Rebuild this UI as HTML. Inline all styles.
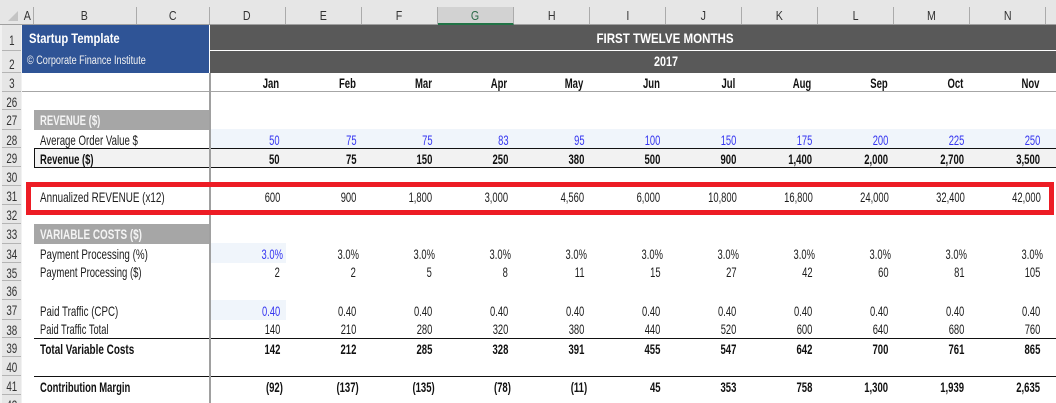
<!DOCTYPE html>
<html><head><meta charset="utf-8">
<style>
html,body{margin:0;padding:0;background:#fff}
#p{position:relative;width:1056px;height:403px;overflow:hidden;background:#fff;font-family:"Liberation Sans",sans-serif;color:#1c1c1c;font-size:14px}
.a{position:absolute}
.t{position:absolute;white-space:nowrap;transform:scaleX(.712);transform-origin:0 50%}
.t.b{transform:scaleX(.675)}
.b{font-weight:bold;color:#111}
.r{position:absolute;left:209.5px;height:19px;line-height:20px;display:flex;width:837px}
.r i{font-style:normal;flex:0 0 76.05px;width:76.05px;box-sizing:border-box;padding-right:5.5px;text-align:right;white-space:nowrap}
.r i s{text-decoration:none;display:inline-block;transform:scaleX(.67);transform-origin:100% 50%}
.r.p i{padding-right:2.8px}
.r.b s{transform:scaleX(.68)}
.r.h i{padding-right:6.2px}
.blue{color:#3535f0}
.c{position:absolute;top:7px;height:17px;line-height:18px;text-align:center;color:#333;font-size:13px;border-right:1px solid #ababab;box-sizing:border-box}
.c s{text-decoration:none;display:inline-block;transform:scaleX(.82)}
.n{position:absolute;left:2px;width:19px;background:#e6e6e6;border-bottom:1px solid #b4b4b4;box-sizing:border-box;text-align:center;color:#333}
.n s{text-decoration:none;display:inline-block;transform:scaleX(.7)}
</style></head><body><div id="p">
<div class="a" style="left:0;top:0;width:1056px;height:24px;background:#e6e6e6"></div>
<div class="a" style="left:0;top:24px;width:22px;height:379px;background:#f1f1f1"></div>
<div class="a" style="left:0;top:24px;width:1056px;height:1px;background:#9f9f9f"></div>
<svg class="a" style="left:7px;top:11px" width="12" height="11"><polygon points="11,0 11,10 1,10" fill="#c4c4c4"/></svg>
<div class="c" style="left:22px;width:12px"><s>A</s></div>
<div class="c" style="left:34px;width:102.5px"><s>B</s></div>
<div class="c" style="left:136.5px;width:73px"><s>C</s></div>
<div class="c" style="left:209.5px;width:76px"><s>D</s></div>
<div class="c" style="left:285.5px;width:76px"><s>E</s></div>
<div class="c" style="left:361.5px;width:76px"><s>F</s></div>
<div class="c" style="left:437.5px;width:76.5px;background:#d2d2d2;color:#2b6a48;border-bottom:2px solid #217346;height:18px"><s>G</s></div>
<div class="c" style="left:514px;width:76px"><s>H</s></div>
<div class="c" style="left:590px;width:76px"><s>I</s></div>
<div class="c" style="left:666px;width:76px"><s>J</s></div>
<div class="c" style="left:742px;width:76px"><s>K</s></div>
<div class="c" style="left:818px;width:76px"><s>L</s></div>
<div class="c" style="left:894px;width:76px"><s>M</s></div>
<div class="c" style="left:970px;width:76px"><s>N</s></div>

<div class="n" style="top:25px;height:26px;line-height:30px"><s>1</s></div>
<div class="n" style="top:51px;height:22px;line-height:26px"><s>2</s></div>
<div class="n" style="top:73px;height:19px;line-height:20px"><s>3</s></div>
<div class="n" style="top:92px;height:18px;line-height:20px"><s>26</s></div>
<div class="n" style="top:110px;height:20px;line-height:21px"><s>27</s></div>
<div class="n" style="top:130px;height:18px;line-height:20px"><s>28</s></div>
<div class="n" style="top:148px;height:19px;line-height:20px"><s>29</s></div>
<div class="n" style="top:167px;height:19px;line-height:20px"><s>30</s></div>
<div class="n" style="top:186px;height:19px;line-height:20px"><s>31</s></div>
<div class="n" style="top:205px;height:19px;line-height:20px"><s>32</s></div>
<div class="n" style="top:224px;height:20px;line-height:21px"><s>33</s></div>
<div class="n" style="top:244px;height:19px;line-height:20px"><s>34</s></div>
<div class="n" style="top:263px;height:18px;line-height:20px"><s>35</s></div>
<div class="n" style="top:281px;height:19px;line-height:20px"><s>36</s></div>
<div class="n" style="top:300px;height:20px;line-height:21px"><s>37</s></div>
<div class="n" style="top:320px;height:18px;line-height:20px"><s>38</s></div>
<div class="n" style="top:338px;height:19px;line-height:20px"><s>39</s></div>
<div class="n" style="top:357px;height:19px;line-height:20px"><s>40</s></div>
<div class="n" style="top:376px;height:19px;line-height:20px"><s>41</s></div>
<div class="n" style="top:395px;height:19px;line-height:20px"><s>42</s></div>

<div class="a" style="left:22px;top:25px;width:187px;height:48px;background:#2f5496"></div>
<div class="a" style="left:209.5px;top:25px;width:847px;height:25px;background:#595959"></div>
<div class="a" style="left:209.5px;top:51px;width:847px;height:22px;background:#595959"></div>
<div class="a" style="left:22px;top:91px;width:1034px;height:1px;background:#a6a6a6"></div>

<div class="t" style="left:29px;top:29px;line-height:18px;color:#fff;font-size:14px;font-weight:bold;transform:scaleX(.8)">Startup Template</div>
<div class="t" style="left:27px;top:52px;line-height:18px;color:#f2f2f2;font-size:11.5px;transform:scaleX(.79)">© Corporate Finance Institute</div>
<div class="t" style="left:565px;top:28.5px;width:200px;text-align:center;line-height:19px;color:#fff;font-size:14px;font-weight:bold;transform:scaleX(.825);transform-origin:50% 50%">FIRST TWELVE MONTHS</div>
<div class="t" style="left:566px;top:52.5px;width:200px;text-align:center;line-height:18px;color:#fff;font-size:13.5px;font-weight:bold;transform:scaleX(.8);transform-origin:50% 50%">2017</div>

<div class="r b h" style="top:73px;line-height:20px"><i><s>Jan</s></i><i><s>Feb</s></i><i><s>Mar</s></i><i><s>Apr</s></i><i><s>May</s></i><i><s>Jun</s></i><i><s>Jul</s></i><i><s>Aug</s></i><i><s>Sep</s></i><i><s>Oct</s></i><i><s>Nov</s></i></div>

<!-- section fills -->
<div class="a" style="left:34px;top:110px;width:175.5px;height:20px;background:#a6a6a6"></div>
<div class="t" style="left:40px;top:110px;line-height:21px;color:#f4f4f4;font-weight:bold;transform:scaleX(.68)">REVENUE ($)</div>
<div class="a" style="left:209.5px;top:129px;width:847px;height:19px;background:#f0f5fb"></div>
<div class="a" style="left:34px;top:148px;width:1030px;height:19.5px;box-sizing:border-box;background:#f2f2f2;border:1px solid #111;border-width:1.5px 0 1px 1.5px"></div>
<div class="a" style="left:34px;top:224px;width:175.5px;height:20px;background:#a6a6a6"></div>
<div class="t" style="left:40px;top:224px;line-height:21px;color:#f4f4f4;font-weight:bold;transform:scaleX(.71)">VARIABLE COSTS ($)</div>
<div class="a" style="left:209.5px;top:243px;width:76.5px;height:20px;background:#f0f5fb"></div>
<div class="a" style="left:209.5px;top:300px;width:76.5px;height:20px;background:#f0f5fb"></div>
<div class="a" style="left:34px;top:338px;width:1022px;height:1px;background:#111"></div>
<div class="a" style="left:34px;top:376px;width:1022px;height:1px;background:#111"></div>

<div class="t" style="left:40px;top:130px;line-height:20px;transform:scaleX(.69)">Average Order Value $</div>
<div class="r blue" style="top:130px"><i><s>50</s></i><i><s>75</s></i><i><s>75</s></i><i><s>83</s></i><i><s>95</s></i><i><s>100</s></i><i><s>150</s></i><i><s>175</s></i><i><s>200</s></i><i><s>225</s></i><i><s>250</s></i></div>

<div class="t b" style="left:40px;top:149px;line-height:20px">Revenue ($)</div>
<div class="r b" style="top:149px"><i><s>50</s></i><i><s>75</s></i><i><s>150</s></i><i><s>250</s></i><i><s>380</s></i><i><s>500</s></i><i><s>900</s></i><i><s>1,400</s></i><i><s>2,000</s></i><i><s>2,700</s></i><i><s>3,500</s></i></div>

<div class="t" style="left:40px;top:187px;line-height:20px;transform:scaleX(.706)">Annualized REVENUE (x12)</div>
<div class="r" style="top:187px"><i><s>600</s></i><i><s>900</s></i><i><s>1,800</s></i><i><s>3,000</s></i><i><s>4,560</s></i><i><s>6,000</s></i><i><s>10,800</s></i><i><s>16,800</s></i><i><s>24,000</s></i><i><s>32,400</s></i><i><s>42,000</s></i></div>

<div class="t" style="left:40px;top:244px;line-height:20px;transform:scaleX(.70)">Payment Processing (%)</div>
<div class="r p" style="top:244px"><i class="blue"><s>3.0%</s></i><i><s>3.0%</s></i><i><s>3.0%</s></i><i><s>3.0%</s></i><i><s>3.0%</s></i><i><s>3.0%</s></i><i><s>3.0%</s></i><i><s>3.0%</s></i><i><s>3.0%</s></i><i><s>3.0%</s></i><i><s>3.0%</s></i></div>

<div class="t" style="left:40px;top:263px;line-height:19px;transform:scaleX(.68)">Payment Processing ($)</div>
<div class="r" style="top:263px;line-height:19px"><i><s>2</s></i><i><s>2</s></i><i><s>5</s></i><i><s>8</s></i><i><s>11</s></i><i><s>15</s></i><i><s>27</s></i><i><s>42</s></i><i><s>60</s></i><i><s>81</s></i><i><s>105</s></i></div>

<div class="t" style="left:40px;top:301px;line-height:20px;transform:scaleX(.695)">Paid Traffic (CPC)</div>
<div class="r" style="top:301px"><i class="blue"><s>0.40</s></i><i><s>0.40</s></i><i><s>0.40</s></i><i><s>0.40</s></i><i><s>0.40</s></i><i><s>0.40</s></i><i><s>0.40</s></i><i><s>0.40</s></i><i><s>0.40</s></i><i><s>0.40</s></i><i><s>0.40</s></i></div>

<div class="t" style="left:40px;top:320px;line-height:19px;transform:scaleX(.665)">Paid Traffic Total</div>
<div class="r" style="top:320px;line-height:19px"><i><s>140</s></i><i><s>210</s></i><i><s>280</s></i><i><s>320</s></i><i><s>380</s></i><i><s>440</s></i><i><s>520</s></i><i><s>600</s></i><i><s>640</s></i><i><s>680</s></i><i><s>760</s></i></div>

<div class="t b" style="left:40px;top:339px;line-height:20px;transform:scaleX(.71)">Total Variable Costs</div>
<div class="r b" style="top:339px"><i><s>142</s></i><i><s>212</s></i><i><s>285</s></i><i><s>328</s></i><i><s>391</s></i><i><s>455</s></i><i><s>547</s></i><i><s>642</s></i><i><s>700</s></i><i><s>761</s></i><i><s>865</s></i></div>

<div class="t b" style="left:40px;top:377px;line-height:20px">Contribution Margin</div>
<div class="r b" style="top:377px"><i style="padding-right:2.8px"><s>(92)</s></i><i style="padding-right:2.8px"><s>(137)</s></i><i style="padding-right:2.8px"><s>(135)</s></i><i style="padding-right:2.8px"><s>(78)</s></i><i style="padding-right:2.8px"><s>(11)</s></i><i><s>45</s></i><i><s>353</s></i><i><s>758</s></i><i><s>1,300</s></i><i><s>1,939</s></i><i><s>2,635</s></i></div>

<div class="a" style="left:209px;top:73px;width:1.5px;height:330px;background:#a0a0a0"></div>
<div class="a" style="left:26px;top:182px;width:1028px;height:33px;box-sizing:border-box;border:5px solid #ed1c24"></div>
</div></body></html>
